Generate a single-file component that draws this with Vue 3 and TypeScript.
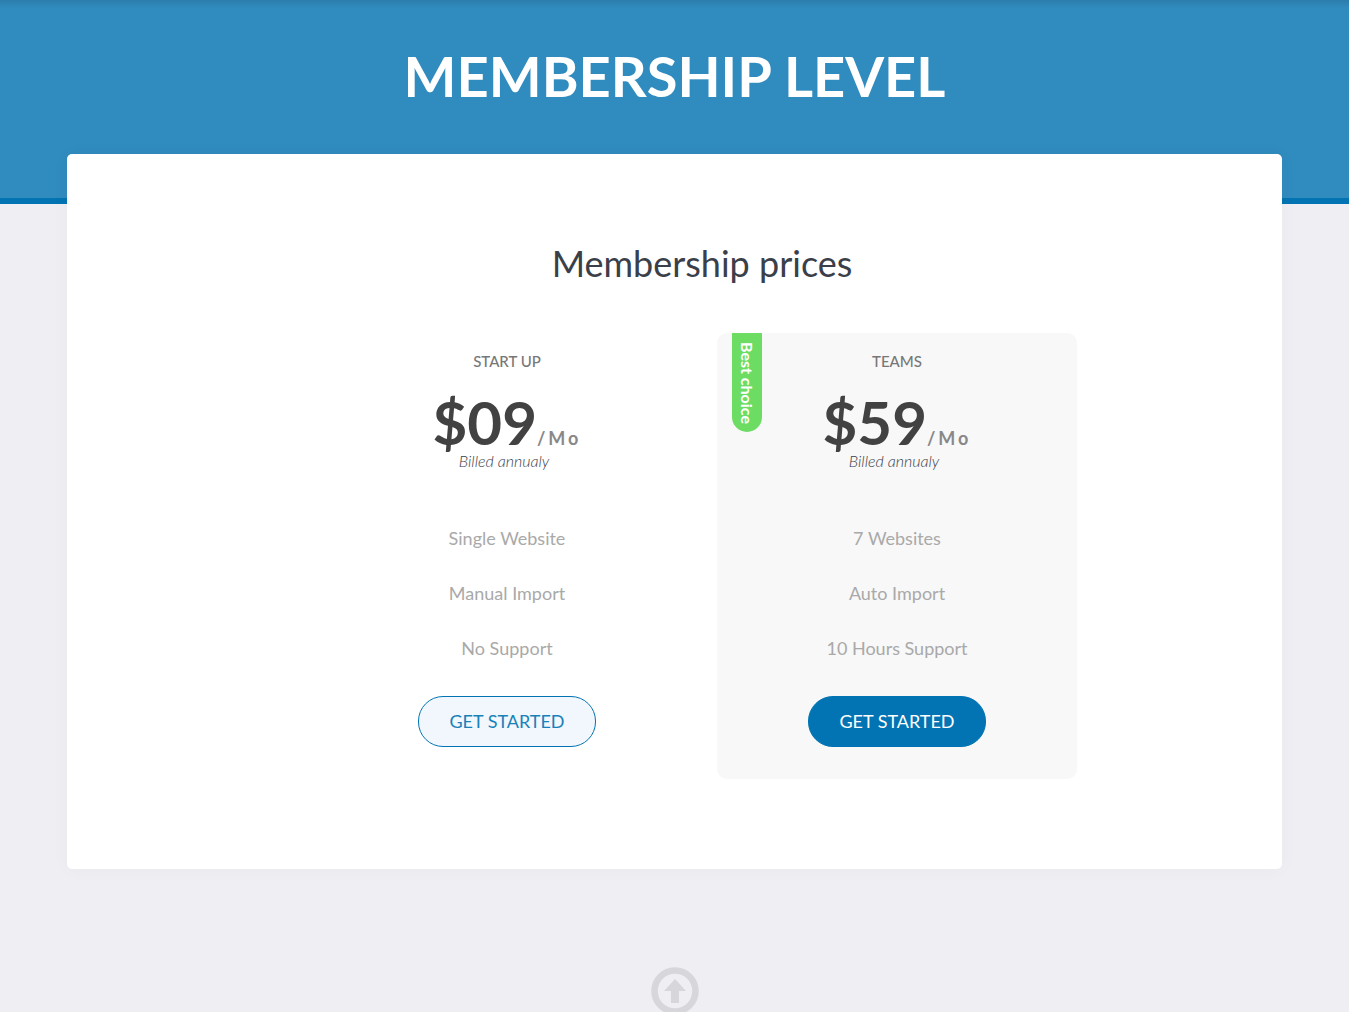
<script setup lang="ts">
interface Plan {
  name: string
  price: string
  features: string[]
  featured: boolean
}

const plans: Plan[] = [
  {
    name: 'START UP',
    price: '$09',
    features: ['Single Website', 'Manual Import', 'No Support'],
    featured: false,
  },
  {
    name: 'TEAMS',
    price: '$59',
    features: ['7 Websites', 'Auto Import', '10 Hours Support'],
    featured: true,
  },
]

function scrollToTop(): void {
  window.scrollTo({ top: 0, behavior: 'smooth' })
}
</script>

<template>
  <div class="page">
    <header class="banner">
      <h1>MEMBERSHIP LEVEL</h1>
    </header>

    <main class="panel">
      <h2>Membership prices</h2>
      <div class="plans">
        <section
          v-for="plan in plans"
          :key="plan.name"
          class="plan"
          :class="{ featured: plan.featured }"
        >
          <span v-if="plan.featured" class="ribbon">Best choice</span>
          <h3>{{ plan.name }}</h3>
          <p class="price">{{ plan.price }}<span class="period">/Mo</span></p>
          <p class="billing">Billed annualy</p>
          <ul>
            <li v-for="feature in plan.features" :key="feature">{{ feature }}</li>
          </ul>
          <button type="button">GET STARTED</button>
        </section>
      </div>
    </main>

    <footer>
      <button type="button" class="to-top" aria-label="Back to top" @click="scrollToTop">
        <svg viewBox="0 0 48 48" width="48" height="48" aria-hidden="true">
          <circle cx="24" cy="24" r="20.5" fill="none" stroke="currentColor" stroke-width="6.5" />
          <path d="M24 12L35 24H28V36H20V24H13Z" fill="currentColor" />
        </svg>
      </button>
    </footer>
  </div>
</template>

<style>
body {
  margin: 0;
  background: #efeef3;
}
</style>

<style scoped>
.page {
  height: 100vh;
  overflow: hidden;
  background: #efeef3;
  color: #3b3f4a;
  font-family: Lato, "Liberation Sans", sans-serif;
}

.banner {
  box-sizing: border-box;
  height: 204px;
  padding-top: 40px;
  border-bottom: 6px solid #0274b3;
  background: linear-gradient(rgba(0, 0, 0, 0.1), rgba(0, 0, 0, 0) 8px) #308bbe;
  text-align: center;
}

h1 {
  margin: 0;
  color: #fff;
  font-size: 56px;
  font-weight: 700;
  line-height: 72px;
}

.panel {
  position: relative;
  box-sizing: border-box;
  margin: -50px 5% 0;
  padding: 85px 0 90px 55px;
  border-radius: 5px;
  background: #fff;
  box-shadow: 0 0 20px rgba(0, 0, 0, 0.03);
}

h2 {
  margin: 0 0 46px;
  font-size: 36px;
  font-weight: 400;
  line-height: 48px;
  text-align: center;
}

.plans {
  display: flex;
  justify-content: center;
  gap: 30px;
}

.plan {
  position: relative;
  box-sizing: border-box;
  width: 360px;
  padding: 19px 0 32px;
  border-radius: 10px;
  text-align: center;
}

.featured {
  background: #f8f8f8;
}

.ribbon {
  position: absolute;
  top: 0;
  left: 15px;
  box-sizing: border-box;
  height: 99px;
  padding: 8px 0;
  border-radius: 0 0 15px 15px;
  background: #6cdc62;
  color: #fff;
  font-size: 16px;
  font-weight: 700;
  line-height: 30px;
  white-space: nowrap;
  writing-mode: vertical-rl;
}

h3 {
  margin: 0;
  color: #777;
  font-size: 15px;
  font-weight: 500;
  line-height: 18px;
}

.price {
  margin: 22px 0 0;
  color: #424242;
  font-size: 60px;
  font-weight: 700;
  line-height: 60px;
}

.period {
  color: #888;
  font-size: 18px;
  line-height: 18px;
  letter-spacing: 3px;
}

.billing {
  margin: 0;
  padding-right: 6px;
  font-size: 16px;
  font-style: italic;
  font-weight: 300;
  line-height: 18px;
}

ul {
  margin: 41px 0 20px;
  padding: 0;
  list-style: none;
}

li {
  color: #a9a9a9;
  font-size: 18px;
  line-height: 55px;
}

.plan button {
  padding: 12px 30px;
  border: 1px solid #0274b3;
  border-radius: 25px;
  background: #f1f7fc;
  color: #1881b9;
  font-family: inherit;
  font-size: 18px;
  line-height: 25px;
  cursor: pointer;
}

.plan.featured button {
  background: #0274b3;
  color: #fff;
}

footer {
  display: flex;
  justify-content: center;
  padding-top: 98px;
}

.to-top {
  display: block;
  padding: 0;
  border: 0;
  background: none;
  color: #d7d6db;
  cursor: pointer;
}

.to-top svg {
  display: block;
}
</style>
